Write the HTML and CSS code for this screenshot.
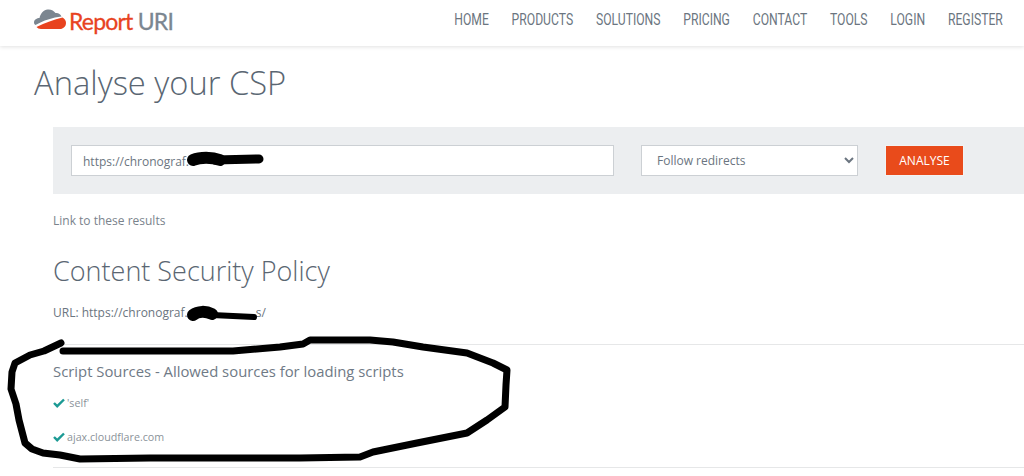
FILE: index.html
```html
<!DOCTYPE html>
<html lang="en">
<head>
    <meta charset="UTF-8">
    <meta name="viewport" content="width=device-width, initial-scale=1.0">
    <title>Analyse your CSP - Report URI</title>
    <link rel="stylesheet" href="styles.css">
</head>
<body>

    <!-- Header -->
    <header class="site-header">
        <a class="logo" href="#">
            <svg class="logo-cloud" width="32" height="21" viewBox="0 0 32 21">
                <path fill="#7b8690" d="M0 13.500C0 10.500 3 9 5.500 9C6.500 4 10 1 13.500 0.500C17 0 20 2 21.500 4C24 3.500 26.500 5 27.500 7.500C19 8.500 9 11.500 1.500 16C0.500 15.500 0 14.500 0 13.500Z"/>
                <path fill="#e8431f" d="M2.500 18C11 14 20 10.500 28.500 8.500C30.500 9.500 32 11.500 32 14C32 17.500 29 20 26 20H7C5 20 3.500 19.200 2.500 18Z"/>
            </svg>
            <span class="logo-text"><span class="logo-red">Report</span> <span class="logo-grey">URI</span></span>
        </a>
        <nav class="main-nav">
            <a href="#">HOME</a>
            <a href="#">PRODUCTS</a>
            <a href="#">SOLUTIONS</a>
            <a href="#">PRICING</a>
            <a href="#">CONTACT</a>
            <a href="#">TOOLS</a>
            <a href="#">LOGIN</a>
            <a href="#">REGISTER</a>
        </nav>
    </header>

    <main class="content">
        <h1>Analyse your CSP</h1>

        <form class="analyse-form">
            <input class="url-input" type="text" value="https://chronograf.">
            <select class="redirect-select">
                <option>Follow redirects</option>
            </select>
            <button class="analyse-btn" type="button">ANALYSE</button>
        </form>

        <p class="results-link">Link to these results</p>

        <h2>Content Security Policy</h2>
        <p class="policy-url">URL: https://chronograf.<span class="redacted"></span>s/</p>

        <section class="directive">
            <h3>Script Sources - Allowed sources for loading scripts</h3>
            <ul class="source-list">
                <li>
                    <svg class="check" width="12" height="10" viewBox="0 0 12 10"><path d="M1 5l3.200 3.200L11 1.500" fill="none" stroke="#1c9a94" stroke-width="2.400"/></svg>
                    'self'
                </li>
                <li>
                    <svg class="check" width="12" height="10" viewBox="0 0 12 10"><path d="M1 5l3.200 3.200L11 1.500" fill="none" stroke="#1c9a94" stroke-width="2.400"/></svg>
                    ajax.cloudflare.com
                </li>
            </ul>
        </section>
    </main>

    <!-- Hand drawn marks over the screenshot -->
    <svg class="ink" width="1024" height="476" viewBox="0 0 1024 476">
        <g fill="none" stroke="#000" stroke-linecap="round" stroke-linejoin="round">
            <path stroke-width="12" d="M193 160C200 157 212 157 220 160"/>
            <path stroke-width="9" d="M215 160L259 159"/>
            <path stroke-width="12" d="M193 315C198 311 206 311 212 314"/>
            <path stroke-width="6" d="M212 315L254 317"/>
            <path stroke-width="7" d="M61 343L44 351L30 355L15 363L12 372L11 389L16 404L19 420L25 443L32 449L43 453L60 455L80 459L150 458L300 458L360 457L373 452L417 443L467 433L487 420L505 407L506 385L507 370L493 363L467 353L423 347L393 342L370 340L310 340L303 344L280 347L233 351L63 351"/>
        </g>
    </svg>

</body>
</html>
```

FILE: styles.css
```css
* {
    margin: 0;
    padding: 0;
    box-sizing: border-box;
}

html, body {
    height: 476px;
    overflow: hidden;
}

body {
    font-family: "Open Sans", sans-serif;
    background-color: #fff;
    color: #6b7580;
    position: relative;
}

.site-header {
    height: 46px;
    display: flex;
    justify-content: space-between;
    align-items: center;
    padding: 0 21px 0 34px;
    box-shadow: 0 1px 4px rgba(0, 0, 0, 0.12);
}

.logo {
    display: flex;
    align-items: center;
    gap: 3px;
    text-decoration: none;
}

.logo-cloud {
    margin-top: -7px;
}

.logo-text {
    font-family: Lato, sans-serif;
    font-size: 23px;
    letter-spacing: -0.8px;
    -webkit-text-stroke: 0.3px;
    line-height: 27px;
    margin-top: -4px;
}

.logo-red {
    color: #e8431f;
}

.logo-grey {
    color: #7b8690;
}

/* no narrow font installed, so the row is squeezed */
.main-nav {
    display: flex;
    gap: 30px;
    margin-bottom: 7px;
    transform: scaleX(0.76);
    transform-origin: right center;
}

.main-nav a {
    font-family: Roboto, sans-serif;
    font-size: 16px;
    color: #6b7580;
    text-decoration: none;
}

.content {
    padding: 0 0 0 34px;
}

h1 {
    font-size: 32.700px;
    font-weight: 300;
    line-height: 46px;
    margin-top: 14px;
    color: #5a6672;
}

.analyse-form {
    display: flex;
    align-items: center;
    height: 67px;
    margin: 21px 0 0 19px;
    padding-left: 18px;
    background-color: #eceef0;
}

.url-input,
.redirect-select {
    height: 31px;
    background-color: #fff;
    border: 1px solid #ccd0d4;
    font-family: "Open Sans", sans-serif;
    font-size: 12px;
    color: #6b7580;
    padding: 0 11px;
}

.url-input {
    width: 543px;
    padding-top: 1px;
}

.redirect-select {
    width: 217px;
    margin-left: 27px;
}

.analyse-btn {
    width: 79px;
    height: 31px;
    margin-left: 27px;
    background-color: #e94b1b;
    color: #fff;
    border: 1px solid #f2f2f2;
    font-family: "Open Sans", sans-serif;
    font-size: 12px;
}

.results-link {
    font-size: 12px;
    line-height: 18px;
    margin: 18px 0 0 19px;
    color: #7a838c;
}

h2 {
    font-size: 27px;
    font-weight: 300;
    line-height: 34px;
    margin: 24px 0 0 19px;
    color: #5a6672;
}

.policy-url {
    font-size: 12px;
    line-height: 18px;
    margin: 16px 0 0 19px;
    color: #6b7580;
}

.redacted {
    display: inline-block;
    width: 68px;
}

.directive {
    margin: 22px 0 0 19px;
    border-top: 1px solid #e6e7e8;
    border-bottom: 1px solid #e6e7e8;
    height: 124px;
    padding-top: 16px;
}

h3 {
    font-size: 14.850px;
    font-weight: 400;
    line-height: 20px;
    color: #6f7a86;
}

.source-list {
    list-style: none;
    margin-top: 14px;
}

.source-list li {
    display: flex;
    align-items: center;
    gap: 2px;
    font-size: 10.700px;
    line-height: 16px;
    color: #8b939a;
    margin-bottom: 18px;
}

.ink {
    position: absolute;
    top: 0;
    left: 0;
    pointer-events: none;
}
```
